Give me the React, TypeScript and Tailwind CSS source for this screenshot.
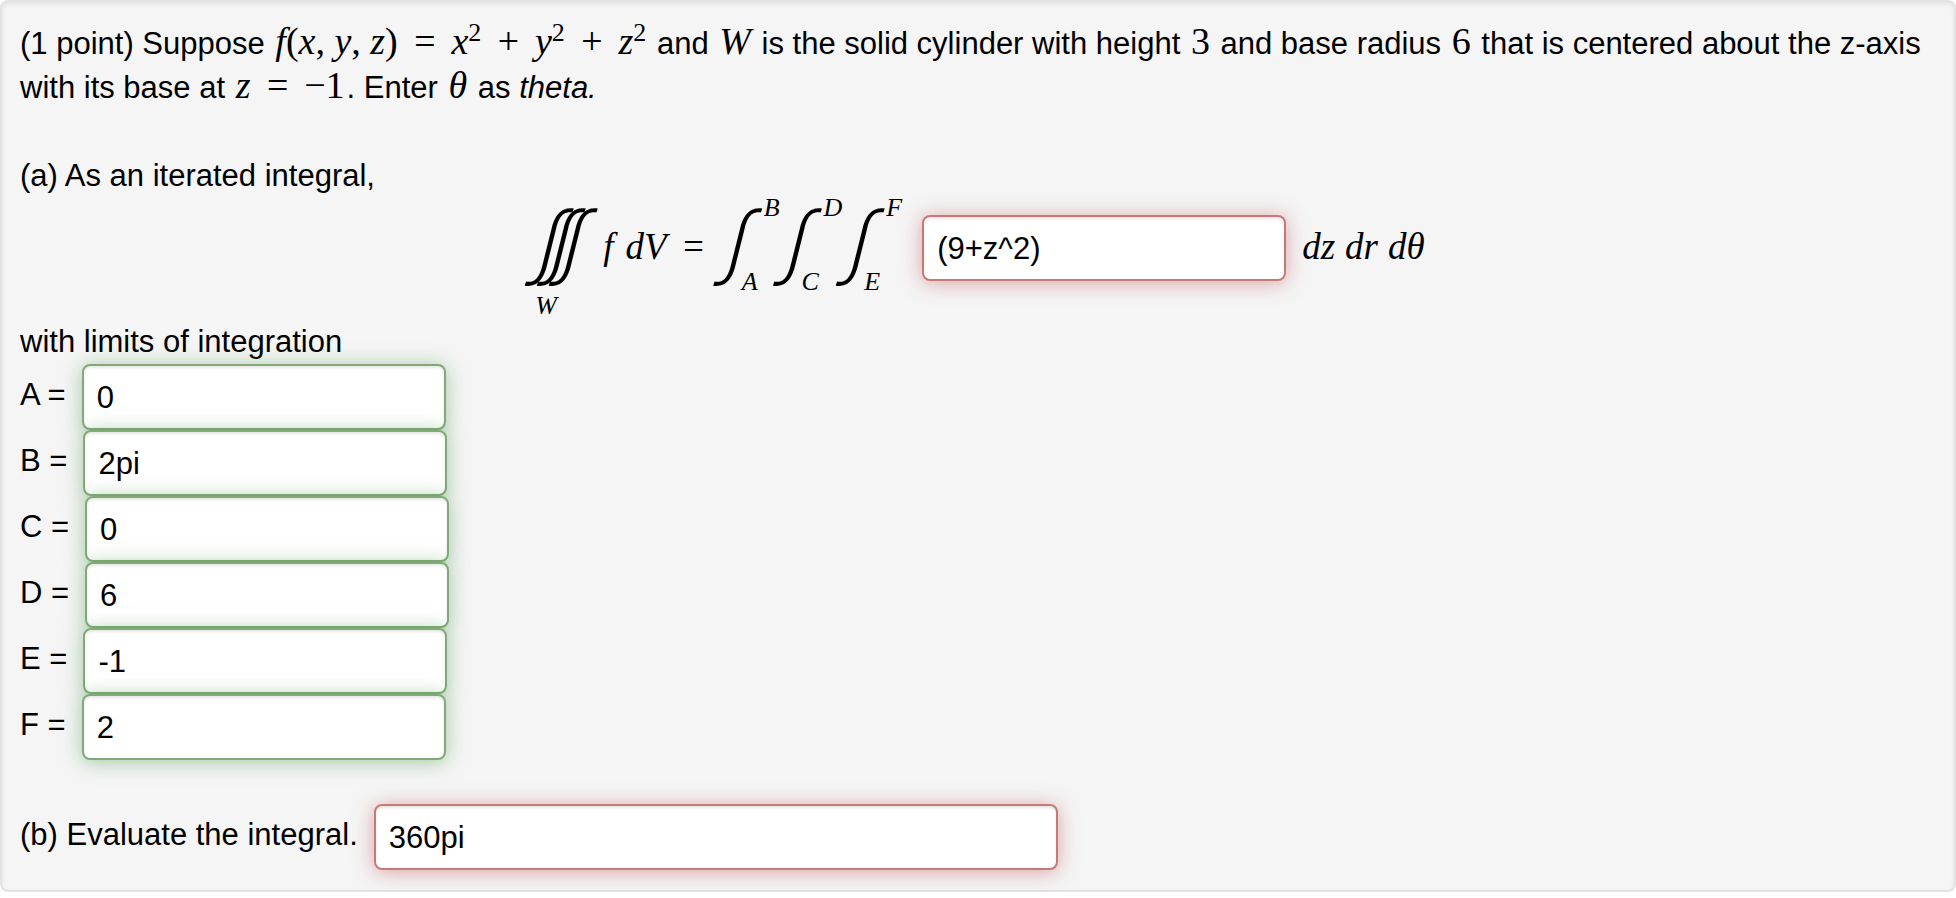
import React, { useState } from 'react'

type Status = 'correct' | 'incorrect'

type AnswerProps = {
  id: string
  label?: string
  value: string
  status: Status
  wide?: boolean
  onChange: (id: string, value: string) => void
}

const limits = ['A', 'B', 'C', 'D', 'E', 'F']

const statusStyles = {
  correct:
    'border-[#81aa76] shadow-[inset_0_2px_3px_rgba(0,0,0,0.1),0_2px_20px_rgba(81,153,81,0.5)]',
  incorrect:
    'border-[#c57a78] shadow-[inset_0_2px_3px_rgba(0,0,0,0.1),0_2px_20px_rgba(191,84,84,0.5)]',
}

function Answer({ id, label, value, status, wide, onChange }: AnswerProps) {
  return (
    <input
      id={id}
      type="text"
      aria-label={label}
      value={value}
      onChange={(e) => onChange(id, e.target.value)}
      className={`h-[66px] rounded-lg border-2 bg-white px-[13px] pt-0.5 text-[31px] outline-none ${
        wide ? 'w-[684px]' : 'w-[364px]'
      } ${statusStyles[status]}`}
    />
  )
}

// Inline formula
function M({ children }: { children: React.ReactNode }) {
  return (
    <span className="mx-0.5 font-['Liberation_Serif',serif] text-[38px] leading-none whitespace-nowrap">
      {children}
    </span>
  )
}

function Op({ children }: { children: React.ReactNode }) {
  return <span className="mx-3.5 italic">{children}</span>
}

function Sup({ children }: { children: React.ReactNode }) {
  return <sup className="text-[26px]">{children}</sup>
}

function IntegralSign() {
  return (
    <span className="flex h-[86px] w-9 justify-center pr-4 font-['Noto_Sans_CJK_JP',sans-serif] text-[84px] leading-[76px] font-light italic">
      ∫
    </span>
  )
}

function Integral({ lower, upper }: { lower: string; upper: string }) {
  return (
    <div className="flex">
      <IntegralSign />
      <div className="-mt-2.5 -ml-3.5 flex h-[100px] flex-col justify-between text-[26px] leading-none italic">
        <span className="pl-[22px]">{upper}</span>
        <span>{lower}</span>
      </div>
    </div>
  )
}

export default function App() {
  const [answers, setAnswers] = useState<Record<string, string>>({
    integrand: '(9+z^2)',
    A: '0',
    B: '2pi',
    C: '0',
    D: '6',
    E: '-1',
    F: '2',
    result: '360pi',
  })

  function update(id: string, value: string) {
    setAnswers({ ...answers, [id]: value })
  }

  return (
    <main className="rounded-lg border-2 border-[#e3e3e3] bg-[#f5f5f5] px-[18px] py-5 font-['Liberation_Sans',Arial,sans-serif] text-[31px] leading-[44px] text-black shadow-[inset_0_2px_4px_rgba(0,0,0,0.08)]">
      <p>
        (1 point) Suppose{' '}
        <M>
          <i>f</i>(<i>x</i>, <i>y</i>, <i>z</i>)<Op>=</Op>
          <i>x</i>
          <Sup>2</Sup>
          <Op>+</Op>
          <i>y</i>
          <Sup>2</Sup>
          <Op>+</Op>
          <i>z</i>
          <Sup>2</Sup>
        </M>{' '}
        and{' '}
        <M>
          <i>W</i>
        </M>{' '}
        is the solid cylinder with height <M>3</M> and base radius <M>6</M> that is centered about
        the z-axis
        <br />
        with its base at{' '}
        <M>
          <i>z</i>
          <Op>=</Op>−1
        </M>
        . Enter{' '}
        <M>
          <i>θ</i>
        </M>{' '}
        as <i>theta.</i>
      </p>

      <p className="mt-11">(a) As an iterated integral,</p>

      {/* Triple integral */}
      <div className="mt-[7px] flex justify-center font-['Liberation_Serif',serif] text-[37px] leading-[84px]">
        <div>
          <div className="flex -space-x-6">
            <IntegralSign />
            <IntegralSign />
            <IntegralSign />
          </div>
          <div className="pl-1 text-[26px] leading-[29px] italic">W</div>
        </div>
        <span className="ml-3 italic">f</span>
        <span className="ml-3 italic">dV</span>
        <Op>=</Op>
        <div className="flex">
          <Integral lower="A" upper="B" />
          <Integral lower="C" upper="D" />
          <Integral lower="E" upper="F" />
        </div>
        <div className="mr-4 ml-5 flex h-[86px] items-center font-['Liberation_Sans',Arial,sans-serif]">
          <Answer
            id="integrand"
            label="Integrand"
            value={answers.integrand}
            status="incorrect"
            onChange={update}
          />
        </div>
        <div className="flex gap-2.5 italic">
          <span>dz</span>
          <span>dr</span>
          <span>dθ</span>
        </div>
      </div>

      <p>with limits of integration</p>
      {limits.map((name) => (
        <div key={name} className="flex items-center">
          <label htmlFor={name} className="mr-4 pb-1">
            {name} =
          </label>
          <Answer id={name} value={answers[name]} status="correct" onChange={update} />
        </div>
      ))}

      <div className="mt-11 flex items-center">
        <label htmlFor="result" className="mr-4 pb-1">
          (b) Evaluate the integral.
        </label>
        <Answer id="result" value={answers.result} status="incorrect" wide onChange={update} />
      </div>
    </main>
  )
}
